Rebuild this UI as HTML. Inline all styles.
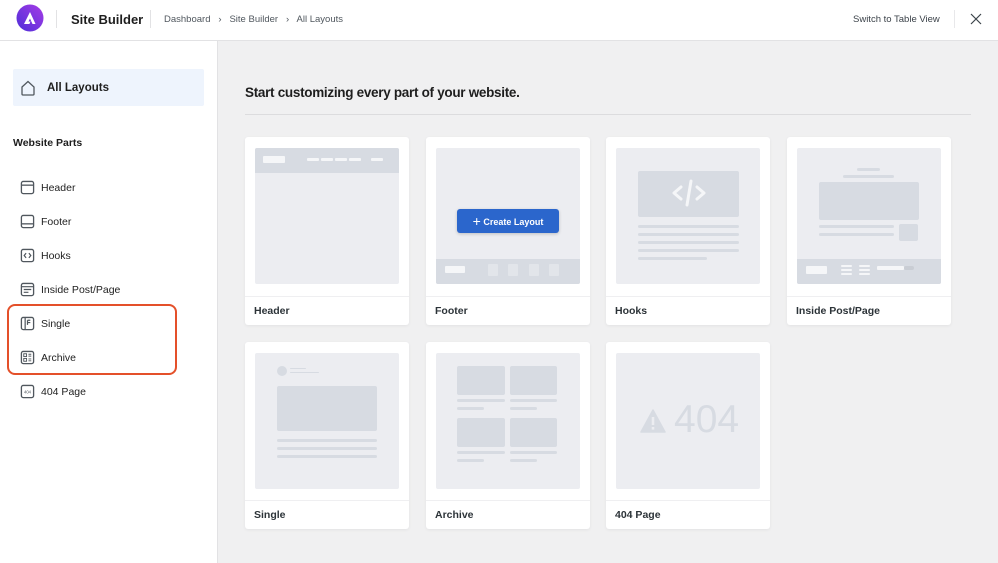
<!DOCTYPE html>
<html><head><meta charset="utf-8"><style>
*{box-sizing:border-box;margin:0;padding:0}
body{width:998px;height:563px;overflow:hidden;font-family:"Liberation Sans",sans-serif;color:#1e1e1e;background:#f0f0f1;position:relative}
.a{position:absolute}
.top{left:0;top:0;width:998px;height:41px;background:#fff;border-bottom:1px solid #e2e2e4}
.side{left:0;top:41px;width:218px;height:522px;background:#fff;border-right:1px solid #e2e2e4}
.nav{left:20px;font-size:10.5px;color:#1e1e1e;display:flex;align-items:center;gap:6px}
.nav svg{width:15px;height:15px}
.card{background:#fff;border-radius:3px;box-shadow:0 1px 3px rgba(0,0,0,.06);width:164px}
.pv{position:absolute;left:10px;top:11px;width:144px;height:136px;background:#ecedf1;border-radius:2px;overflow:hidden}
.lb{position:absolute;left:0;right:0;bottom:0;height:29px;border-top:1px solid #efeff1;font-size:10.5px;font-weight:bold;color:#2c3338;padding:8px 0 0 9px}
.g{position:absolute;background:#d7dbe2;border-radius:2px}
.w{position:absolute;background:#f5f6f8;border-radius:1px}
</style></head><body>
<div class="a top"></div>
<svg class="a" style="left:16px;top:4px" width="28" height="28" viewBox="0 0 28 28"><defs><linearGradient id="lg" x1="0" y1="1" x2="1" y2="0"><stop offset="0" stop-color="#4d2ed8"/><stop offset="1" stop-color="#a63ce6"/></linearGradient></defs><circle cx="14" cy="14" r="13.5" fill="url(#lg)"/><path d="M8 20 L14 8 L19.5 20 L16.5 20 L14 14.5 L12.5 17.5 L14.5 17.5 L13.4 20 Z" fill="#fff"/></svg>
<div class="a" style="left:56px;top:10px;width:1px;height:18px;background:#e2e2e4"></div>
<div class="a" style="left:71px;top:12px;font-size:13px;font-weight:bold;color:#1e1e1e">Site Builder</div>
<div class="a" style="left:150px;top:10px;width:1px;height:18px;background:#e2e2e4"></div>
<div class="a" style="left:164px;top:14px;font-size:9.5px;color:#50575e">Dashboard &nbsp;&nbsp;›&nbsp;&nbsp; Site Builder &nbsp;&nbsp;›&nbsp;&nbsp; All Layouts</div>
<div class="a" style="left:853px;top:14px;font-size:9.5px;color:#3c434a">Switch to Table View</div>
<div class="a" style="left:954px;top:10px;width:1px;height:18px;background:#e8e8ea"></div>
<svg class="a" style="left:970px;top:13px" width="12" height="12" viewBox="0 0 12 12"><path d="M1 1L11 11M11 1L1 11" stroke="#3c434a" stroke-width="1.2"/></svg>

<div class="a side"></div>
<div class="a" style="left:13px;top:69px;width:191px;height:37px;background:#eef4fd;border-radius:2px"></div>
<svg class="a" style="left:20px;top:80px" width="16" height="16" viewBox="0 0 16 16"><path d="M2 7 L8 1.5 L14 7 V14 a1 1 0 0 1 -1 1 H3 a1 1 0 0 1 -1 -1 Z" fill="none" stroke="#50575e" stroke-width="1.3"/></svg>
<div class="a" style="left:47px;top:82px;font-size:11.5px;font-weight:bold;color:#1e1e1e">All Layouts</div>
<div class="a" style="left:13px;top:137px;font-size:10.5px;font-weight:bold;color:#1e1e1e">Website Parts</div>

<div class="a nav" style="top:180px"><svg viewBox="0 0 16 16"><rect x="1.5" y="1.5" width="13" height="13" rx="2" fill="none" stroke="#50575e" stroke-width="1.4"/><path d="M1.5 5.5H14.5" stroke="#50575e" stroke-width="1.4"/></svg>Header</div>
<div class="a nav" style="top:214px"><svg viewBox="0 0 16 16"><rect x="1.5" y="1.5" width="13" height="13" rx="2" fill="none" stroke="#50575e" stroke-width="1.4"/><path d="M1.5 10.5H14.5" stroke="#50575e" stroke-width="1.4"/></svg>Footer</div>
<div class="a nav" style="top:248px"><svg viewBox="0 0 16 16"><rect x="1.5" y="1.5" width="13" height="13" rx="2" fill="none" stroke="#50575e" stroke-width="1.4"/><path d="M6.5 5.5L4.5 8L6.5 10.5M9.5 5.5L11.5 8L9.5 10.5" fill="none" stroke="#50575e" stroke-width="1.3"/></svg>Hooks</div>
<div class="a nav" style="top:282px"><svg viewBox="0 0 16 16"><rect x="1.5" y="1.5" width="13" height="13" rx="2" fill="none" stroke="#50575e" stroke-width="1.4"/><path d="M1.5 5H14.5M4 8H12M4 11H9" stroke="#50575e" stroke-width="1.3"/></svg>Inside Post/Page</div>
<div class="a nav" style="top:316px"><svg viewBox="0 0 16 16"><rect x="1.5" y="1.5" width="13" height="13" rx="2" fill="none" stroke="#50575e" stroke-width="1.4"/><path d="M5.5 1.5V14.5M8 4.5H11M8 7H11M8 4.5V9.5" stroke="#50575e" stroke-width="1.3"/></svg>Single</div>
<div class="a nav" style="top:350px"><svg viewBox="0 0 16 16"><rect x="1.5" y="1.5" width="13" height="13" rx="2" fill="none" stroke="#50575e" stroke-width="1.4"/><rect x="4" y="4" width="3" height="3" fill="none" stroke="#50575e"/><rect x="4" y="9" width="3" height="3" fill="none" stroke="#50575e"/><path d="M9 4.5H12M9 6.5H12M9 9.5H12M9 11.5H12" stroke="#50575e"/></svg>Archive</div>
<div class="a nav" style="top:384px"><svg viewBox="0 0 16 16"><rect x="1.5" y="1.5" width="13" height="13" rx="2" fill="none" stroke="#50575e" stroke-width="1.4"/><text x="8" y="10" font-size="4.5" text-anchor="middle" fill="#50575e" font-family="Liberation Sans">404</text></svg>404 Page</div>
<div class="a" style="left:7px;top:304px;width:170px;height:71px;border:2.5px solid #e4502a;border-radius:8px"></div>

<div class="a" style="left:245px;top:85px;font-size:13.5px;font-weight:bold;color:#1e1e1e;letter-spacing:-0.3px">Start customizing every part of your website.</div>
<div class="a" style="left:245px;top:114px;width:726px;height:1px;background:#dcdcde"></div>

<!-- Header -->
<div class="a card" style="left:245px;top:137px;height:188px"><div class="pv">
<div class="g" style="left:0;top:0;width:144px;height:25px;border-radius:0"></div>
<div class="w" style="left:8px;top:8px;width:22px;height:7px"></div>
<div class="w" style="left:52px;top:10px;width:12px;height:3px"></div><div class="w" style="left:66px;top:10px;width:12px;height:3px"></div><div class="w" style="left:80px;top:10px;width:12px;height:3px"></div><div class="w" style="left:94px;top:10px;width:12px;height:3px"></div><div class="w" style="left:116px;top:10px;width:12px;height:3px"></div>
</div><div class="lb">Header</div></div>

<!-- Footer -->
<div class="a card" style="left:426px;top:137px;height:188px"><div class="pv">
<div class="g" style="left:0;top:111px;width:144px;height:25px;border-radius:0"></div>
<div class="w" style="left:9px;top:118px;width:20px;height:7px"></div>
<div class="w" style="left:52px;top:116px;width:10px;height:12px;background:#e2e5ea"></div><div class="w" style="left:72px;top:116px;width:10px;height:12px;background:#e2e5ea"></div><div class="w" style="left:93px;top:116px;width:10px;height:12px;background:#e2e5ea"></div><div class="w" style="left:113px;top:116px;width:10px;height:12px;background:#e2e5ea"></div>
</div>
<div class="a" style="left:31px;top:72px;width:102px;height:24px;background:#2b66cc;border-radius:3px;color:#fff;font-size:9px;font-weight:bold;text-align:center;line-height:24px;box-shadow:0 1px 3px rgba(0,0,0,.2)"><span style="font-size:14px;font-weight:normal;vertical-align:-1px">+</span> Create Layout</div>
<div class="lb">Footer</div></div>

<!-- Hooks -->
<div class="a card" style="left:606px;top:137px;height:188px"><div class="pv">
<div class="g" style="left:22px;top:23px;width:101px;height:46px"></div>
<svg class="a" style="left:56px;top:30px" width="34" height="30" viewBox="0 0 34 30"><path d="M9 9L2 15L9 21M25 9L32 15L25 21M19 3L15 27" fill="none" stroke="#f5f6f8" stroke-width="3" stroke-linecap="round" stroke-linejoin="round"/></svg>
<div class="g" style="left:22px;top:77px;width:101px;height:3px"></div><div class="g" style="left:22px;top:85px;width:101px;height:3px"></div><div class="g" style="left:22px;top:93px;width:101px;height:3px"></div><div class="g" style="left:22px;top:101px;width:101px;height:3px"></div><div class="g" style="left:22px;top:109px;width:69px;height:3px"></div>
</div><div class="lb">Hooks</div></div>

<!-- Inside -->
<div class="a card" style="left:787px;top:137px;height:188px"><div class="pv">
<div class="g" style="left:60px;top:20px;width:23px;height:3px"></div><div class="g" style="left:46px;top:27px;width:51px;height:3px"></div>
<div class="g" style="left:22px;top:34px;width:100px;height:38px"></div>
<div class="g" style="left:22px;top:77px;width:75px;height:3px"></div><div class="g" style="left:22px;top:85px;width:75px;height:3px"></div>
<div class="g" style="left:102px;top:76px;width:19px;height:17px"></div>
<div class="g" style="left:0;top:111px;width:144px;height:25px;border-radius:0"></div>
<div class="w" style="left:9px;top:118px;width:21px;height:8px"></div>
<div class="w" style="left:44px;top:117px;width:11px;height:2px"></div><div class="w" style="left:44px;top:121px;width:11px;height:2px"></div><div class="w" style="left:44px;top:125px;width:11px;height:2px"></div>
<div class="w" style="left:62px;top:117px;width:11px;height:2px"></div><div class="w" style="left:62px;top:121px;width:11px;height:2px"></div><div class="w" style="left:62px;top:125px;width:11px;height:2px"></div>
<div class="w" style="left:80px;top:118px;width:27px;height:4px"></div><div class="g" style="left:107px;top:118px;width:10px;height:4px;background:#c9cdd4"></div>
</div><div class="lb">Inside Post/Page</div></div>

<!-- Single -->
<div class="a card" style="left:245px;top:342px;height:187px"><div class="pv">
<div class="g" style="left:22px;top:13px;width:10px;height:10px;border-radius:50%"></div>
<div class="g" style="left:35px;top:15px;width:16px;height:1px"></div><div class="g" style="left:35px;top:19px;width:29px;height:1px"></div>
<div class="g" style="left:22px;top:33px;width:100px;height:45px"></div>
<div class="g" style="left:22px;top:86px;width:100px;height:3px"></div><div class="g" style="left:22px;top:94px;width:100px;height:3px"></div><div class="g" style="left:22px;top:102px;width:100px;height:3px"></div>
</div><div class="lb">Single</div></div>

<!-- Archive -->
<div class="a card" style="left:426px;top:342px;height:187px"><div class="pv">
<div class="g" style="left:21px;top:13px;width:48px;height:29px"></div><div class="g" style="left:74px;top:13px;width:47px;height:29px"></div>
<div class="g" style="left:21px;top:46px;width:48px;height:3px"></div><div class="g" style="left:74px;top:46px;width:47px;height:3px"></div>
<div class="g" style="left:21px;top:54px;width:27px;height:3px"></div><div class="g" style="left:74px;top:54px;width:27px;height:3px"></div>
<div class="g" style="left:21px;top:65px;width:48px;height:29px"></div><div class="g" style="left:74px;top:65px;width:47px;height:29px"></div>
<div class="g" style="left:21px;top:98px;width:48px;height:3px"></div><div class="g" style="left:74px;top:98px;width:47px;height:3px"></div>
<div class="g" style="left:21px;top:106px;width:27px;height:3px"></div><div class="g" style="left:74px;top:106px;width:27px;height:3px"></div>
</div><div class="lb">Archive</div></div>

<!-- 404 -->
<div class="a card" style="left:606px;top:342px;height:187px"><div class="pv">
<svg class="a" style="left:24px;top:56px" width="26" height="24" viewBox="0 0 26 24"><path d="M13 1L25 23H1Z" fill="#d7dbe2" stroke="#d7dbe2" stroke-linejoin="round" stroke-width="1.5"/><rect x="11.7" y="8" width="2.6" height="8" fill="#ecedf1"/><rect x="11.7" y="18" width="2.6" height="2.6" fill="#ecedf1"/></svg>
<div class="a" style="left:58px;top:45px;font-size:39px;color:#d7dbe2;font-family:'Liberation Sans',sans-serif">404</div>
</div><div class="lb">404 Page</div></div>
</body></html>
